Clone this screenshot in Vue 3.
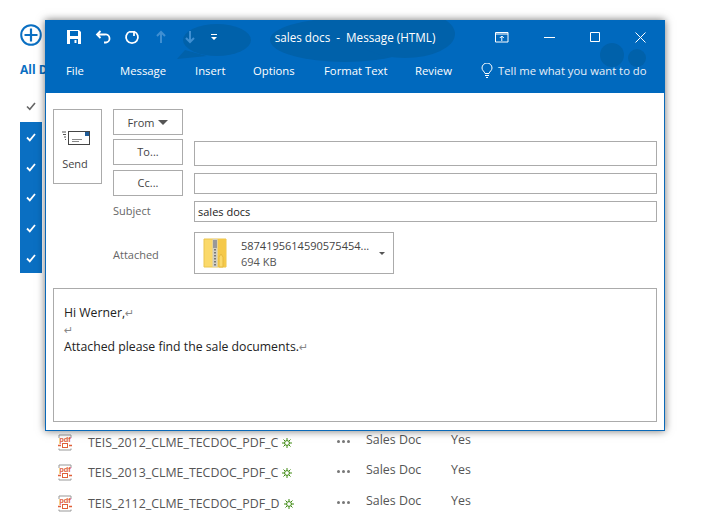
<template>
  <div class="page">
    <!-- list behind the compose window -->
    <div class="list">
      <svg class="plus" width="22" height="22" viewBox="0 0 22 22" fill="none" stroke="#0a6fc2">
        <circle cx="11" cy="11" r="9.8" stroke-width="2" />
        <path d="M11 4.5v13M4.5 11h13" stroke-width="2.2" />
      </svg>
      <div class="all-docs">All D</div>
      <div class="head-check"><svg width="12" height="12" viewBox="0 0 12 12"><path d="M2 6.5l2.8 2.8L10 3" fill="none" stroke="#666" stroke-width="1.6" /></svg></div>
      <div class="selected">
        <div v-for="n in 5" :key="n" class="sel-row">
          <svg width="12" height="12" viewBox="0 0 12 12"><path d="M2 6.5l2.8 2.8L10 3" fill="none" stroke="#fff" stroke-width="1.8" /></svg>
        </div>
      </div>
      <div class="files">
        <div v-for="f in files" :key="f.name" class="file-row" :style="{ height: f.h + 'px' }">
          <svg class="pdf" width="16" height="17" viewBox="0 0 16 17" fill="none">
            <path d="M2 4V1h12v3M2 14.500v1.500h12v-1.500" stroke="#999" />
            <text x="8" y="8" text-anchor="middle" class="pdf-label">pdf</text>
            <path d="M1 11.500h3M12 11.500h3" stroke="#e0603a" stroke-width="1.500" />
            <rect x="5.500" y="9.500" width="5" height="4" stroke="#e0603a" />
          </svg>
          <span class="file-name">{{ f.name }}</span>
          <svg class="star" :class="{ shifted: f.shift }" width="10" height="10" viewBox="0 0 10 10" stroke="#3f8a12" fill="none">
            <path d="M5 0v10M0 5h10M1.500 1.500l7 7M8.500 1.500l-7 7" />
            <circle cx="5" cy="5" r="2.400" fill="#fff" />
          </svg>
          <span class="dots"><i></i><i></i><i></i></span>
          <span class="file-type">Sales Doc</span>
          <span class="file-flag">Yes</span>
        </div>
      </div>
    </div>

    <!-- compose window -->
    <div class="window">
      <div class="chrome">
        <svg class="clouds" width="620" height="73" viewBox="0 0 620 73">
          <g fill="#0061aa">
            <ellipse cx="172" cy="20" rx="34" ry="16" />
            <path d="M140 30l-8 9 30-3z" />
            <ellipse cx="300" cy="20" rx="75" ry="22" />
            <ellipse cx="360" cy="14" rx="50" ry="24" />
            <circle cx="567" cy="35" r="12" />
            <circle cx="592" cy="38" r="9" />
          </g>
        </svg>
        <div class="titlebar">
          <div class="quick">
            <svg width="16" height="16" viewBox="0 0 16 16"><path d="M1 1h12l2 2v12H1z" fill="#fff" /><path d="M4 2h8v5H4zM4 10h8v5H4z" fill="#0069be" /><path d="M8.500 11h2v3h-2z" fill="#fff" /></svg>
            <svg width="16" height="16" viewBox="0 0 16 16" fill="none" stroke="#fff" stroke-width="1.800"><path d="M5.500 2L2 5.500 5.500 9M2 5.500h8a4 4 0 0 1 1 8H9" /></svg>
            <svg width="16" height="16" viewBox="0 0 16 16" fill="none" stroke="#fff" stroke-width="1.800"><path d="M10 2.500a6 6 0 1 1-4 0M10 2v5M6 2.800h4" /></svg>
            <svg class="dim" width="16" height="16" viewBox="0 0 16 16" fill="none" stroke="#3f8fd2" stroke-width="2"><path d="M8 14V3M4 7l4-4 4 4" /></svg>
            <svg class="dim" width="16" height="16" viewBox="0 0 16 16" fill="none" stroke="#3f8fd2" stroke-width="2"><path d="M8 2v11M4 9l4 4 4-4" /></svg>
            <svg class="more" width="8" height="8" viewBox="0 0 8 8" fill="#fff"><path d="M1 1h6v1H1zM1 4h6L4 7z" /></svg>
          </div>
          <div class="title">sales docs&nbsp; -&nbsp; Message (HTML)</div>
          <div class="controls">
            <svg width="14" height="12" viewBox="0 0 14 12" fill="none" stroke="#fff"><path d="M.5 1.500h12.500v9.500H.5zM.5 3h12.500M6.800 10V5M4.800 7l2-2 2 2" /></svg>
            <svg class="ctl-min" width="11" height="1" viewBox="0 0 11 1"><path d="M0 .5h11" stroke="#fff" /></svg>
            <svg class="ctl-max" width="10" height="10" viewBox="0 0 10 10" fill="none" stroke="#fff"><path d="M.5.5h9v9h-9z" /></svg>
            <svg class="ctl-close" width="11" height="11" viewBox="0 0 11 11" fill="none" stroke="#fff"><path d="M.5.5l10 10M10.500.5l-10 10" /></svg>
          </div>
        </div>
        <div class="tabs">
          <span v-for="t in tabs" :key="t.label" class="tab" :style="{ width: t.w + 'px' }">{{ t.label }}</span>
          <svg class="bulb" width="12" height="15" viewBox="0 0 12 15" fill="none" stroke="#fff"><path d="M4 10.500C3.500 8.500 1 7.500 1 5a5 5 0 0 1 10 0c0 2.500-2.500 3.500-3 5.500zM4 12.500h4M5 14.500h2" /></svg>
          <span class="tell">Tell me what you want to do</span>
        </div>
      </div>

      <div class="content">
        <div class="header">
          <button class="send">
            <svg width="30" height="16" viewBox="0 0 30 16" fill="none">
              <rect x="6.500" y="1.500" width="21" height="13" fill="#fff" stroke="#444" />
              <rect x="23" y="2" width="4" height="4" fill="#1f5c99" />
              <path d="M10 9.500h10M10 11.500h7" stroke="#888" />
              <path d="M0 2h4M1 4.500h3M2 7h2M3 9.500h1" stroke="#555" />
            </svg>
            <span>Send</span>
          </button>
          <div class="fields">
            <div class="row row-from">
              <button class="addr">From <i class="caret"></i></button>
            </div>
            <div class="row row-to">
              <button class="addr">To...</button>
              <div class="input in-to"></div>
            </div>
            <div class="row row-cc">
              <button class="addr">Cc...</button>
              <div class="input in-cc"></div>
            </div>
            <div class="row row-subject">
              <label>Subject</label>
              <div class="input in-subject">sales docs</div>
            </div>
            <div class="row row-attached">
              <label>Attached</label>
              <div class="attachment">
                <svg width="24" height="30" viewBox="0 0 24 30">
                  <path d="M1 1h22v28H1z" fill="#fbd96a" stroke="#eac54f" />
                  <path d="M15 1h8v28h-8z" fill="#f5c94a" />
                  <rect x="9.500" y="1" width="5" height="28" fill="#d2cfc2" />
                  <path d="M12 2v26" stroke="#777" stroke-width="2" stroke-dasharray="1.500 1.500" />
                  <rect x="10" y="2" width="4" height="8" fill="#999" />
                  <path d="M16 29V19l2-3 2 3v10z" fill="#fbd96a" stroke="#e6b93f" />
                </svg>
                <div class="att-text">
                  <div class="att-name">5874195614590575454...</div>
                  <div class="att-size">694 KB</div>
                </div>
                <i class="att-caret"></i>
              </div>
            </div>
          </div>
        </div>
        <div class="body">
          <p>Hi Werner,<span class="mark">↵</span></p>
          <p class="blank"><span class="mark">↵</span></p>
          <p>Attached please find the sale documents.<span class="mark">↵</span></p>
        </div>
      </div>
    </div>
  </div>
</template>

<script setup>
const tabs = [
  { label: 'File', w: 54 },
  { label: 'Message', w: 75 },
  { label: 'Insert', w: 58 },
  { label: 'Options', w: 71 },
  { label: 'Format Text', w: 91 },
  { label: 'Review', w: 66 }
]

const files = [
  { name: 'TEIS_2012_CLME_TECDOC_PDF_C', h: 30 },
  { name: 'TEIS_2013_CLME_TECDOC_PDF_C', h: 31 },
  { name: 'TEIS_2112_CLME_TECDOC_PDF_D', h: 30, shift: true }
]
</script>

<style>
html, body { margin: 0; background: #fff; overflow: hidden; }
</style>

<style scoped>
.page { position: relative; width: 704px; height: 516px; background: #fff; overflow: hidden; font-family: "Open Sans", "Noto Sans", sans-serif; color: #333; }

.list { display: flex; flex-direction: column; align-items: flex-start; padding: 24px 0 0 20px; }
.plus { display: block; }
.all-docs { margin-top: 16px; font-size: 12px; line-height: 16px; font-weight: 700; color: #0a6fc2; white-space: nowrap; }
.head-check { width: 22px; height: 12px; margin-top: 22px; display: flex; justify-content: center; }
.selected { width: 22px; margin-top: 10px; background: #0a6fc2; }
.sel-row { height: 30.2px; display: flex; align-items: center; justify-content: center; }
.files { margin-top: 160px; margin-left: 37px; }
.file-row { display: flex; align-items: flex-start; font-size: 12.4px; line-height: 16px; color: #555; white-space: nowrap; }
.pdf { width: 16px; flex: none; margin-top: 1px; }
.pdf-label { font-size: 7.5px; font-weight: 700; fill: #e0603a; font-family: "Liberation Sans", sans-serif; }
.file-name { margin-left: 15px; width: 194px; flex: none; margin-top: 2px; }
.star { flex: none; margin-top: 5px; }
.star.shifted { margin-left: 2px; margin-right: -2px; }
.dots { margin-left: 45px; margin-top: 7px; display: flex; gap: 2px; width: 20px; flex: none; }
.dots i { width: 3px; height: 3px; border-radius: 50%; background: #777; display: block; flex: none; }
.file-type { margin-left: 9px; width: 85px; flex: none; margin-top: -1px; }
.file-flag { margin-top: -1px; }

.window { position: absolute; left: 45px; top: 20px; width: 620px; height: 411px; box-sizing: border-box; background: #fff; border: 1px solid #0a69b8; box-shadow: 0 0 8px rgba(0, 0, 0, 0.55); display: flex; flex-direction: column; }
.chrome { position: relative; height: 73px; margin: -1px -1px 0; background: #0069be; color: #fff; flex: none; overflow: hidden; }
.clouds { position: absolute; left: 0; top: 0; }
.titlebar { position: relative; display: flex; align-items: center; height: 34px; }
.quick { display: flex; align-items: center; gap: 13px; margin-left: 21px; width: 199px; flex: none; }
.more { margin-left: -1px; }
.title { width: 180px; text-align: center; font-size: 11.7px; line-height: 16px; white-space: nowrap; }
.controls { display: flex; align-items: center; margin-left: 50px; }
.ctl-min { margin-left: 35px; }
.ctl-max { margin-left: 35px; }
.ctl-close { margin-left: 35px; }
.tabs { position: relative; display: flex; align-items: center; height: 32px; font-size: 11.3px; white-space: nowrap; padding-left: 21px; }
.tab { flex: none; }
.bulb { flex: none; }
.tell { margin-left: 5px; color: #e8f0f8; }

.content { flex: 1; display: flex; flex-direction: column; gap: 14px; padding: 16px 7px 8px; min-height: 0; }
.header { display: flex; gap: 11px; align-items: flex-start; }
button { font-family: inherit; color: inherit; background: #fff; border: 1px solid #ababab; box-sizing: border-box; padding: 0; margin: 0; }
.send { width: 49px; height: 75px; display: flex; flex-direction: column; align-items: center; padding-top: 20px; gap: 11px; font-size: 11px; line-height: 14px; color: #444; }
.send svg { margin-right: 2px; }
.send span { margin-right: 5px; }
.fields { flex: 1; display: flex; flex-direction: column; min-width: 0; }
.row { display: flex; align-items: center; gap: 11px; }
.row-from { height: 26px; }
.row-to { height: 26px; margin-top: 4px; }
.row-cc { height: 26px; margin-top: 5px; }
.row-subject { height: 21px; margin-top: 5px; }
.row-attached { height: 42px; margin-top: 10px; }
.addr { width: 70px; height: 26px; font-size: 11px; color: #444; display: flex; align-items: center; justify-content: center; gap: 4px; }
.row-to .addr, .row-cc .addr { padding-bottom: 2px; }
.caret { width: 0; height: 0; border-left: 5px solid transparent; border-right: 5px solid transparent; border-top: 5px solid #555; }
.input { flex: 1; box-sizing: border-box; border: 1px solid #ababab; background: #fff; font-size: 11px; line-height: 19px; padding-left: 3px; color: #222; }
.in-to { height: 25px; margin-top: 2px; }
.in-cc { height: 21px; }
.in-subject { height: 21px; }
label { width: 70px; flex: none; font-size: 11px; color: #666; }
.row-subject label { margin-top: -3px; }
.row-attached label { margin-top: 2px; }
.attachment { box-sizing: border-box; width: 200px; height: 42px; border: 1px solid #ababab; display: flex; align-items: center; padding-left: 8px; color: #444; }
.att-text { margin-left: 14px; margin-top: 2px; width: 132px; font-size: 11px; line-height: 16.5px; white-space: nowrap; overflow: hidden; }
.att-size { color: #555; }
.att-caret { margin-left: 6px; width: 0; height: 0; border-left: 3px solid transparent; border-right: 3px solid transparent; border-top: 3px solid #555; }

.body { flex: 1; box-sizing: border-box; border: 1px solid #ababab; padding: 15px 10px 0; font-size: 12.25px; line-height: 17px; color: #222; }
.body p { margin: 0; }
.body .blank { height: 17px; }
.mark { color: #888; font-size: 11px; line-height: 0; font-family: "DejaVu Sans", sans-serif; }
</style>
